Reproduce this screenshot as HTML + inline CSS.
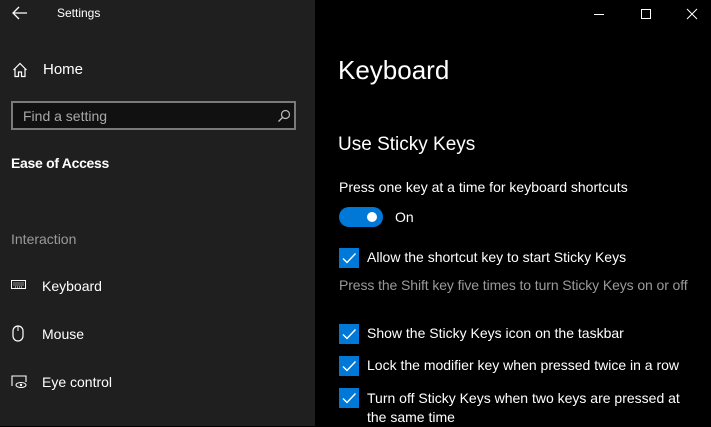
<!DOCTYPE html><html><head><style>
body{margin:0;width:711px;height:426px;overflow:hidden;background:#000;font-family:"Liberation Sans",sans-serif;color:#fff;position:relative}
.side{position:absolute;left:0;top:0;width:315px;height:426px;background:#1f1f1f}
.a{position:absolute;white-space:nowrap}
.cb{position:absolute;left:339px;width:20px;height:20px;background:#0078d7}
.cb svg{position:absolute;left:0;top:0}
.t{font-size:14px;left:367px}
</style></head><body>
<div class="side">
<svg class="a" style="left:12px;top:6px" width="16" height="14"><path d="M7 1L1 7L7 13M1 7H15" stroke="#fff" stroke-width="1.3" fill="none"/></svg>
<div class="a" style="left:57px;top:6px;font-size:12px">Settings</div>
<svg class="a" style="left:12px;top:62px" width="16" height="16"><path d="M1.5 8L8 1.5L14.5 8M3 6.5V14.5H6.5V10H9.5V14.5H13V6.5" stroke="#fff" stroke-width="1.2" fill="none"/></svg>
<div class="a" style="left:43px;top:61px;font-size:15px">Home</div>
<div class="a" style="left:11px;top:101px;width:285px;height:29px;border:2px solid #7a7a7a;box-sizing:border-box;background:#111"></div>
<div class="a" style="left:23px;top:108px;font-size:14px;color:#a8a8a8">Find a setting</div>
<svg class="a" style="left:277px;top:109px" width="14" height="14"><circle cx="8.5" cy="5.5" r="4" stroke="#bbb" fill="none" stroke-width="1.2"/><path d="M5.5 8.5L1.5 12.5" stroke="#bbb" stroke-width="1.3"/></svg>
<div class="a" style="left:11px;top:155px;font-size:14px;font-weight:bold;letter-spacing:-0.3px">Ease of Access</div>
<div class="a" style="left:11px;top:231px;font-size:14px;color:#9a9a9a">Interaction</div>
<svg class="a" style="left:11px;top:280px" width="16" height="10"><rect x="0.5" y="0.5" width="14" height="8" stroke="#fff" fill="none"/><path d="M2.5 3H13M2.5 5H13M4 7H11" stroke="#fff" stroke-dasharray="1 1"/></svg>
<div class="a" style="left:42px;top:278px;font-size:14px">Keyboard</div>
<svg class="a" style="left:12px;top:325px" width="14" height="18"><rect x="1" y="1" width="10" height="15" rx="5" stroke="#fff" fill="none" stroke-width="1.2"/><path d="M6 1V6" stroke="#fff"/></svg>
<div class="a" style="left:42px;top:326px;font-size:14px">Mouse</div>
<svg class="a" style="left:11px;top:375px" width="17" height="14"><path d="M1 11V1H15V7" stroke="#fff" fill="none" stroke-width="1.1"/><ellipse cx="10" cy="10" rx="5" ry="2.5" stroke="#fff" fill="none"/><circle cx="10" cy="10" r="1.2" fill="#fff"/></svg>
<div class="a" style="left:42px;top:374px;font-size:14px">Eye control</div>
</div>
<svg class="a" style="left:594px;top:8px" width="110" height="12"><path d="M0 6.5H10" stroke="#fff"/><rect x="47.5" y="1.5" width="9" height="9" stroke="#fff" fill="none"/><path d="M93 1L103 11M103 1L93 11" stroke="#fff"/></svg>
<div class="a" style="left:338px;top:55px;font-size:26px">Keyboard</div>
<div class="a" style="left:338px;top:134px;font-size:19px">Use Sticky Keys</div>
<div class="a" style="left:339px;top:179px;font-size:14px">Press one key at a time for keyboard shortcuts</div>
<div class="a" style="left:339px;top:207px;width:44px;height:20px;border-radius:10px;background:#0078d7"></div>
<div class="a" style="left:367px;top:212px;width:10px;height:10px;border-radius:5px;background:#fff"></div>
<div class="a" style="left:395px;top:209px;font-size:14px">On</div>
<div class="cb" style="top:248px"><svg width="20" height="20"><path d="M4 10.5L8 14.5L16.5 5.5" stroke="#fff" stroke-width="1.4" fill="none"/></svg></div>
<div class="a t" style="top:249px">Allow the shortcut key to start Sticky Keys</div>
<div class="a" style="left:339px;top:277px;font-size:14px;color:#9a9a9a;letter-spacing:-0.1px">Press the Shift key five times to turn Sticky Keys on or off</div>
<div class="cb" style="top:324px"><svg width="20" height="20"><path d="M4 10.5L8 14.5L16.5 5.5" stroke="#fff" stroke-width="1.4" fill="none"/></svg></div>
<div class="a t" style="top:325px">Show the Sticky Keys icon on the taskbar</div>
<div class="cb" style="top:356px"><svg width="20" height="20"><path d="M4 10.5L8 14.5L16.5 5.5" stroke="#fff" stroke-width="1.4" fill="none"/></svg></div>
<div class="a t" style="top:357px">Lock the modifier key when pressed twice in a row</div>
<div class="cb" style="top:388px"><svg width="20" height="20"><path d="M4 10.5L8 14.5L16.5 5.5" stroke="#fff" stroke-width="1.4" fill="none"/></svg></div>
<div class="a t" style="top:389px;line-height:19px">Turn off Sticky Keys when two keys are pressed at<br>the same time</div>
</body></html>
